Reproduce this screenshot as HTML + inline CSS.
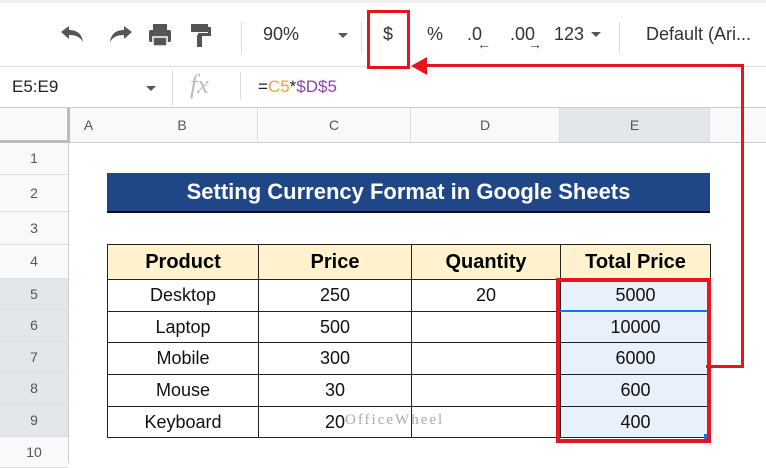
<!DOCTYPE html>
<html><head><style>
body{margin:0;width:766px;height:463px;overflow:hidden;background:#fff;font-family:"Liberation Sans",Arial,sans-serif;position:relative}
.a{position:absolute}
.t{color:#333;font-size:18px;font-weight:500}
.rn{position:absolute;left:0;width:68px;text-align:center;font-size:14px;color:#555;border-bottom:1px solid #ddd;background:#f8f9fa}
.ch{position:absolute;top:108px;height:34px;line-height:34px;text-align:center;font-size:14px;color:#555;border-right:1px solid #ddd;background:#f8f9fa;border-bottom:1px solid #ccc}
table{position:absolute;left:107px;top:244px;border-collapse:collapse;font-size:18px}
td{border:1.5px solid #222;text-align:center;padding:0;color:#111}
tr.r{height:31.7px}
th{border:1.5px solid #222;background:#fff2cc;font-size:20px;padding:0}
.e{background:#e8f0fb}
</style></head><body>
<div class="a" style="left:0;top:0;width:766px;height:3px;background:#eee"></div>
<svg class="a" style="left:55px;top:22px" width="170" height="28" viewBox="0 0 170 28">
<path d="M6 10 L14 4 V8 C22 8 27 12 28 20 C25 15 21 13 14 13 V17 Z" fill="#555"/>
<path d="M77 10 L69 4 V8 C61 8 56 12 55 20 C58 15 62 13 69 13 V17 Z" fill="#555"/>
<rect x="98" y="2" width="14" height="6" fill="#555"/><rect x="94" y="8" width="22" height="12" rx="2" fill="#555"/><rect x="98" y="15" width="14" height="9" fill="#555" stroke="#fff" stroke-width="1.5"/>
<rect x="136" y="2" width="17" height="8" fill="#555"/><rect x="153" y="5" width="3" height="8" fill="#555"/><rect x="143" y="11" width="13" height="3" fill="#555"/><rect x="142" y="13" width="5" height="12" fill="#555"/>
</svg>
<div class="a" style="left:241px;top:22px;width:1px;height:32px;background:#ddd"></div>
<div class="a t" style="left:263px;top:24px">90%</div>
<div class="a" style="left:338px;top:33px;border:5px solid transparent;border-top:5px solid #555"></div>
<div class="a" style="left:361px;top:22px;width:1px;height:32px;background:#ddd"></div>
<div class="a t" style="left:383px;top:24px">$</div>
<div class="a t" style="left:427px;top:24px">%</div>
<div class="a t" style="left:467px;top:24px">.0</div><div class="a" style="left:477px;top:36px;font-size:14px;color:#444;font-weight:bold">←</div>
<div class="a t" style="left:510px;top:24px">.00</div><div class="a" style="left:528px;top:36px;font-size:14px;color:#444;font-weight:bold">→</div>
<div class="a t" style="left:554px;top:24px">123</div>
<div class="a" style="left:591px;top:32px;border:5px solid transparent;border-top:5px solid #555"></div>
<div class="a" style="left:619px;top:22px;width:1px;height:32px;background:#ddd"></div>
<div class="a t" style="left:646px;top:24px">Default (Ari...</div>
<div class="a" style="left:0;top:66px;width:766px;height:1px;background:#ddd"></div>
<div class="a" style="left:12px;top:77px;font-size:17px;color:#222">E5:E9</div>
<div class="a" style="left:146px;top:86px;border:5px solid transparent;border-top:5px solid #555"></div>
<div class="a" style="left:172px;top:70px;width:1px;height:36px;background:#ddd"></div>
<div class="a" style="left:190px;top:70px;font-family:'Liberation Serif',serif;font-style:italic;font-size:26px;color:#bbb">fx</div>
<div class="a" style="left:240px;top:72px;width:1px;height:28px;background:#ddd"></div>
<div class="a" style="left:258px;top:77px;font-size:17px;color:#222">=<span style="color:#f4a13b">C5</span>*<span style="color:#8e44ad">$D$5</span></div>
<div class="a" style="left:0;top:107px;width:766px;height:1px;background:#ccc"></div>
<div class="ch" style="left:0;width:67px;border-right:3px solid #bbb;border-bottom:3px solid #bbb;height:32px"></div>
<div class="ch" style="left:70px;width:37px">A</div>
<div class="ch" style="left:107px;width:150px">B</div>
<div class="ch" style="left:258px;width:152px">C</div>
<div class="ch" style="left:411px;width:148px">D</div>
<div class="ch" style="left:560px;width:149px;background:#e3e6ea">E</div>
<div class="ch" style="left:710px;width:56px;border-right:none"></div>
<div class="rn" style="top:143px;height:31px;line-height:31px">1</div>
<div class="rn" style="top:175px;height:36px;line-height:36px">2</div>
<div class="rn" style="top:212px;height:32px;line-height:32px">3</div>
<div class="rn" style="top:245px;height:33px;line-height:33px">4</div>
<div class="rn" style="top:279px;height:30px;line-height:30px;background:#e3e6ea">5</div>
<div class="rn" style="top:310px;height:31px;line-height:31px;background:#e3e6ea">6</div>
<div class="rn" style="top:342px;height:30px;line-height:30px;background:#e3e6ea">7</div>
<div class="rn" style="top:373px;height:31px;line-height:31px;background:#e3e6ea">8</div>
<div class="rn" style="top:405px;height:31px;line-height:31px;background:#e3e6ea">9</div>
<div class="rn" style="top:437px;height:30px;line-height:30px">10</div>
<div class="a" style="left:68px;top:142px;width:1px;height:321px;background:#ccc"></div>
<div class="a" style="left:107px;top:173px;width:603px;height:38px;background:#1f4788;border-bottom:2px solid #111;color:#fff;font-weight:bold;font-size:22px;text-align:center;line-height:38px">Setting Currency Format in Google Sheets</div>
<table>
<tr style="height:35px"><th style="width:150px">Product</th><th style="width:152px">Price</th><th style="width:148px">Quantity</th><th style="width:149px">Total Price</th></tr>
<tr class="r"><td>Desktop</td><td>250</td><td>20</td><td class="e">5000</td></tr>
<tr class="r"><td>Laptop</td><td>500</td><td></td><td class="e">10000</td></tr>
<tr class="r"><td>Mobile</td><td>300</td><td></td><td class="e">6000</td></tr>
<tr class="r"><td>Mouse</td><td>30</td><td></td><td class="e">600</td></tr>
<tr class="r"><td>Keyboard</td><td>20</td><td></td><td class="e">400</td></tr>
</table>
<div class="a" style="left:560px;top:310px;width:148px;height:2px;background:#1a73e8"></div>
<div class="a" style="left:704px;top:434px;width:7px;height:7px;background:#1a73e8"></div>
<div class="a" style="left:345px;top:412px;font-family:'Liberation Serif',serif;font-size:15px;color:#aaa;letter-spacing:2px">OfficeWheel</div>
<div class="a" style="left:367px;top:10px;width:37px;height:53px;border:3px solid #e8141c"></div>
<div class="a" style="left:556px;top:278px;width:147px;height:157px;border:4px solid #e8141c"></div>
<div class="a" style="left:425px;top:64px;width:319px;height:3px;background:#e8141c"></div>
<div class="a" style="left:411px;top:57px;border:9px solid transparent;border-right:16px solid #e8141c;border-left:0"></div>
<div class="a" style="left:741px;top:64px;width:3px;height:304px;background:#e8141c"></div>
<div class="a" style="left:706px;top:365px;width:38px;height:3px;background:#e8141c"></div>
</body></html>
